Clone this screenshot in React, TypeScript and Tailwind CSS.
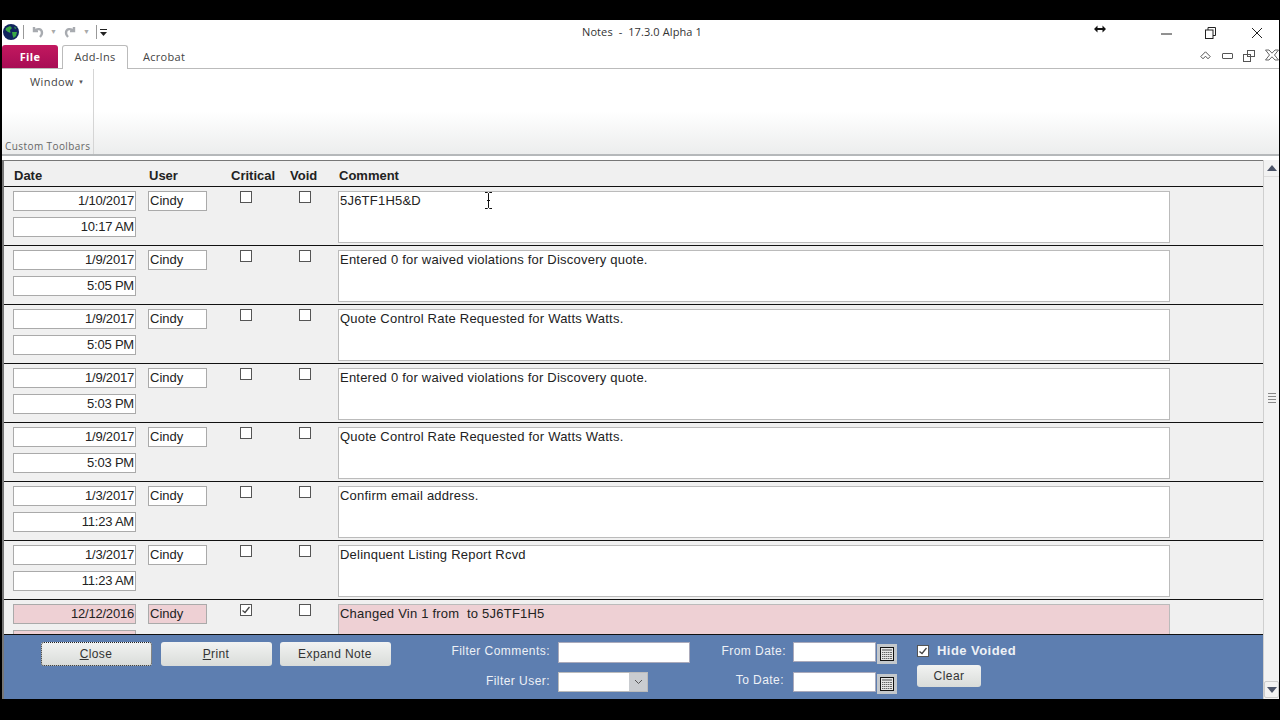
const notes = [
  { date: "1/10/2017", time: "10:17 AM", text: "5J6TF1H5&D" },
  { date: "1/9/2017", time: "5:05 PM", text: "Entered 0 for waived violations for Discovery quote." },
  { date: "1/9/2017", time: "5:05 PM", text: "Quote Control Rate Requested for Watts Watts." },
  { date: "1/9/2017", time: "5:03 PM", text: "Entered 0 for waived violations for Discovery quote." },
  { date: "1/9/2017", time: "5:03 PM", text: "Quote Control Rate Requested for Watts Watts." },
  { date: "1/3/2017", time: "11:23 AM", text: "Confirm email address." },
  { date: "1/3/2017", time: "11:23 AM", text: "Delinquent Listing Report Rcvd" },
  { date: "12/12/2016", time: "", text: "Changed Vin 1 from  to 5J6TF1H5", critical: true },
];

function Box({ checked = false }: { checked?: boolean }) {
  return (
    <div className="w-[12px] h-[12px] border border-[#555] bg-white flex items-center justify-center shrink-0">
      {checked && (
        <svg width="10" height="10" viewBox="0 0 10 10" fill="none">
          <path d="M1.5 5.5 L4 7.5 L8.5 2" stroke="#444" strokeWidth="1.3" />
        </svg>
      )}
    </div>
  );
}

function NoteRow({ note }: { note: (typeof notes)[number] }) {
  const fill = note.critical ? "bg-[#eed0d4]" : "bg-white";
  return (
    <div className="h-[59px] shrink-0 border-b border-[#111] flex pl-[9px] pt-[4px] text-[13px] text-[#222]">
      <div className="w-[123px] flex flex-col gap-[6px] tracking-[-0.2px]">
        <div className={`h-[20px] border border-[#aaa] ${fill} text-right pr-[1px] leading-[17px]`}>{note.date}</div>
        <div className={`h-[20px] border border-[#aaa] ${fill} text-right pr-[1px] leading-[17px]`}>{note.time}</div>
      </div>
      <div className={`ml-[12px] w-[59px] h-[20px] border border-[#aaa] ${fill} pl-[1px] leading-[17px]`}>Cindy</div>
      <div className="ml-[33px]">
        <Box checked={note.critical} />
      </div>
      <div className="ml-[47px]">
        <Box />
      </div>
      <div className={`ml-[27px] w-[832px] h-[52px] border border-[#bbb] ${fill} pl-[1px] leading-[17px] tracking-[0.22px] whitespace-pre`}>{note.text}</div>
    </div>
  );
}

function CalendarIcon() {
  return (
    <div className="w-[20px] h-[20px] bg-[#c4c8cc] flex items-center justify-center">
      <svg width="14" height="14" viewBox="0 0 14 14">
        <rect x="0.5" y="0.5" width="13" height="13" fill="#e8e8e8" stroke="#111" />
        <rect x="2" y="2" width="10" height="2" fill="#999" />
        <path d="M2 5.5h10M2 7.5h10M2 9.5h10M2 11.5h10" stroke="#666" />
        <path d="M3.5 5v7M5.5 5v7M7.5 5v7M9.5 5v7" stroke="#e8e8e8" strokeWidth="0.6" />
      </svg>
    </div>
  );
}

function PanelButton({ label, className = "" }: { label: React.ReactNode; className?: string }) {
  return (
    <div className={`h-[24px] w-[111px] rounded-[3px] bg-gradient-to-b from-[#f2f3f2] to-[#d9dcd9] text-[#333] text-[12px] tracking-[0.4px] pr-[1px] flex items-center justify-center ${className}`}>
      {label}
    </div>
  );
}

export default function App() {
  return (
    <div className="w-[1280px] h-[720px] bg-black overflow-hidden pt-[20px] pl-[2px] pr-[1px] relative" style={{ fontFamily: '"Liberation Sans", Arial, sans-serif' }}>
      <div className="w-full h-[679px] bg-white flex flex-col">
        {/* TITLE BAR */}
        <div className="h-[24px] shrink-0 flex items-center relative">
          <svg className="ml-[1px]" width="16" height="16" viewBox="0 0 16 16">
            <circle cx="8" cy="8" r="8" fill="#10245e" />
            <path d="M3 4 L7 2 L9 4 L7 6 L7.5 9 L5 8 L2.5 6Z" fill="#39a845" />
            <path d="M9 8 L14 8 L13 12 L10.5 14 L9.5 11Z" fill="#39a845" />
            <path d="M11 2.5 L13.5 4 L12 5Z" fill="#39a845" />
          </svg>
          <div className="ml-[4px] w-px h-[14px] bg-[#999]" />
          <svg className="ml-[7px]" width="14" height="14" viewBox="0 0 14 14" fill="none">
            <path d="M3 2v4h4M3.5 6C6 3 11 3.5 11 8c0 2-1 3-2 4" stroke="#a8abb0" strokeWidth="2.4" />
          </svg>
          <span className="ml-[5px] text-[#aaa] text-[7px]">▼</span>
          <svg className="ml-[6px]" width="14" height="14" viewBox="0 0 14 14" fill="none">
            <path d="M11 2v4H7M10.5 6C8 3 3 3.5 3 8c0 2 1 3 2 4" stroke="#a8abb0" strokeWidth="2.4" />
          </svg>
          <span className="ml-[6px] text-[#aaa] text-[7px]">▼</span>
          <div className="ml-[6px] w-px h-[14px] bg-[#999]" />
          <svg className="ml-[3px]" width="7" height="7" viewBox="0 0 7 7">
            <path d="M0 0.5h7" stroke="#222" />
            <path d="M0 3h7L3.5 7Z" fill="#222" />
          </svg>
          <div className="absolute left-[580px] top-[4px] text-[11px] tracking-[0.1px] text-[#333] whitespace-pre" style={{ fontFamily: '"Open Sans", sans-serif' }}>Notes  -  17.3.0 Alpha 1</div>
          <svg className="absolute left-[1092px] top-[5px]" width="12" height="8" viewBox="0 0 12 8">
            <path d="M0 4 L3.5 0.5V3H8.5V0.5L12 4L8.5 7.5V5H3.5V7.5Z" fill="#111" />
          </svg>
          <svg className="absolute left-[1159px] top-[13px]" width="11" height="2" viewBox="0 0 11 2"><path d="M0 1h11" stroke="#222" /></svg>
          <svg className="absolute left-[1203px] top-[7px]" width="11" height="12" viewBox="0 0 11 12" fill="none" stroke="#222">
            <rect x="0.5" y="3" width="7.5" height="8.5" />
            <path d="M3 3V0.5H10.5V8.5H8" />
          </svg>
          <svg className="absolute left-[1249px] top-[7px]" width="12" height="12" viewBox="0 0 12 12" fill="none" stroke="#222">
            <path d="M1 1l10 10M11 1L1 11" />
          </svg>
        </div>

        {/* TABS */}
        <div className="h-[24px] shrink-0 flex items-end relative text-[11px] tracking-[0.3px]">
          <div className="w-[56px] h-[23px] pt-[1px] rounded-t-[3px] bg-gradient-to-b from-[#c2185f] to-[#a80d55] text-white font-bold flex items-center justify-center" style={{ fontFamily: '"Open Sans", sans-serif' }}>File</div>
          <div className="ml-[4px] w-[66px] h-[24px] -mb-px z-10 bg-white border border-b-0 border-[#bbb] rounded-t-[3px] text-[#444] flex items-center justify-center" style={{ fontFamily: '"Open Sans", sans-serif' }}>Add-Ins</div>
          <div className="ml-[15px] h-[23px] pt-[1px] text-[#444] flex items-center" style={{ fontFamily: '"Open Sans", sans-serif' }}>Acrobat</div>
          <svg className="absolute left-[1198px] top-[7px]" width="11" height="9" viewBox="0 0 11 9" fill="none" stroke="#555">
            <path d="M0.8 5.5 L5.5 0.8 L10.2 5.5 L8 7.8 L5.5 5.2 L3 7.8Z" />
          </svg>
          <div className="absolute left-[1220px] top-[9px] w-[11px] h-[6px] border border-[#555] rounded-[1px]" />
          <svg className="absolute left-[1241px] top-[6px]" width="12" height="12" viewBox="0 0 12 12" fill="none" stroke="#555">
            <rect x="0.5" y="4.5" width="7" height="7" />
            <rect x="4.5" y="0.5" width="7" height="6" />
          </svg>
          <svg className="absolute left-[1263px] top-[5px]" width="14" height="12" viewBox="0 0 14 12" fill="none" stroke="#666">
            <path d="M0.5 1h3.5L7 4.2 10 1h3.5L9.5 6l4 5H10L7 7.8 4 11H0.5l4-5Z" />
          </svg>
        </div>

        {/* RIBBON */}
        <div className="h-[88px] shrink-0 border-t border-[#bbb] border-b-2 border-b-[#b5b8ba] bg-gradient-to-b from-white via-white to-[#eceded] flex">
          <div className="w-[92px] h-full border-r border-[#d5d5d5] flex flex-col justify-between pl-[3px]">
            <div className="pl-[25px] pt-[5px] text-[11px] tracking-[0.4px] text-[#444] flex items-center gap-[4px]" style={{ fontFamily: '"Open Sans", sans-serif' }}>
              Window <span className="text-[6px] text-[#555]">▼</span>
            </div>
            <div className="text-[10px] tracking-[0.42px] text-[#666] whitespace-nowrap" style={{ fontFamily: '"Open Sans", sans-serif' }}>Custom Toolbars</div>
          </div>
        </div>

        {/* BODY */}
        <div className="flex-1 min-h-0 flex pt-[4px] bg-white">
          <div className="flex-1 min-w-0 flex flex-col border-l-2 border-t border-[#777]">
            <div className="flex-1 min-h-0 overflow-hidden flex flex-col bg-[#f0f0f0]">
              <div className="h-[26px] shrink-0 border-b border-[#111] flex items-center pl-[10px] pt-[5px] text-[13px] font-bold text-[#222]">
                <span className="w-[135px]">Date</span>
                <span className="w-[82px]">User</span>
                <span className="w-[59px]">Critical</span>
                <span className="w-[49px]">Void</span>
                <span>Comment</span>
              </div>
              {notes.map((n, i) => (
                <NoteRow key={i} note={n} />
              ))}
            </div>

            {/* FILTER PANEL */}
            <div className="h-[65px] shrink-0 border-t border-[#111] bg-[#5d7eb0] flex text-[#eef1f6] text-[12px] tracking-[0.45px]">
              <div className="ml-[37px] mt-[7px] flex gap-[9px] h-[24px]">
                <PanelButton className="outline-1 outline-dotted outline-[#222] -outline-offset-1" label={<><u>C</u>lose</>} />
                <PanelButton label={<><u>P</u>rint</>} />
                <PanelButton className="-ml-[1px]" label="Expand Note" />
              </div>
              <div className="ml-[51px] w-[248px] shrink-0 grid grid-cols-[108px_1fr] gap-x-[8px] gap-y-[9px] pt-[7px] content-start">
                <span className="text-right leading-[18px] whitespace-nowrap">Filter Comments:</span>
                <div className="w-[132px] h-[21px] bg-white border border-[#aab]" />
                <span className="text-right leading-[18px]">Filter User:</span>
                <div className="w-[90px] h-[20px] bg-white border border-[#bbb] flex justify-end">
                  <div className="w-[18px] h-full bg-[#c9ccd0] flex items-center justify-center">
                    <svg width="9" height="6" viewBox="0 0 9 6" fill="none"><path d="M1 1l3.5 3.5L8 1" stroke="#555" /></svg>
                  </div>
                </div>
              </div>
              <div className="ml-[22px] shrink-0 grid grid-cols-[80px_83px_20px] gap-x-[1px] gap-y-[8px] pt-[7px] content-start">
                <span className="text-right leading-[18px] whitespace-nowrap pr-[6px]">From Date:</span>
                <div className="h-[20px] bg-white border border-[#aab]" />
                <div className="mt-[2px]"><CalendarIcon /></div>
                <span className="text-right leading-[17px] whitespace-nowrap pr-[8px]">To Date:</span>
                <div className="h-[20px] bg-white border border-[#aab]" />
                <div className="mt-[2px]"><CalendarIcon /></div>
              </div>
              <div className="ml-[20px] pt-[10px] flex flex-col gap-[8px]">
                <div className="flex items-center gap-[8px] h-[12px] font-bold text-[13px]">
                  <Box checked />
                  <span>Hide Voided</span>
                </div>
                <div className="w-[64px] h-[22px] rounded-[3px] bg-gradient-to-b from-[#f2f3f2] to-[#d9dcd9] text-[#333] flex items-center justify-center">Clear</div>
              </div>
            </div>
          </div>

          {/* SCROLLBAR */}
          <div className="w-[16px] shrink-0 bg-[#f2f2f2] border-l border-[#cfcfcf] flex flex-col items-center">
            <div className="w-full h-[17px] border-b border-[#ddd] flex items-center justify-center">
              <svg width="10" height="6" viewBox="0 0 10 6"><path d="M0 6 L5 0 L10 6Z" fill="#4c5468" /></svg>
            </div>
            <div className="flex-1 flex flex-col gap-[2px] pt-[216px]">
              <div className="w-[8px] h-px bg-[#888]" />
              <div className="w-[8px] h-px bg-[#888]" />
              <div className="w-[8px] h-px bg-[#888]" />
              <div className="w-[8px] h-px bg-[#888]" />
            </div>
            <div className="w-full h-[17px] mb-[1px] border border-[#ccc] rounded-[2px] flex items-center justify-center">
              <svg width="10" height="6" viewBox="0 0 10 6"><path d="M0 0 L5 6 L10 0Z" fill="#4c5468" /></svg>
            </div>
          </div>
        </div>
      </div>

      {/* I-BEAM CURSOR */}
      <svg className="absolute left-[484px] top-[192px]" width="9" height="17" viewBox="0 0 9 17" fill="none" stroke="#111">
        <path d="M1 0.5h2.5l1 1 1-1H8M4.5 1.5v14M1 16.5h2.5l1-1 1 1H8M3 8.5h3" />
      </svg>
    </div>
  );
}
